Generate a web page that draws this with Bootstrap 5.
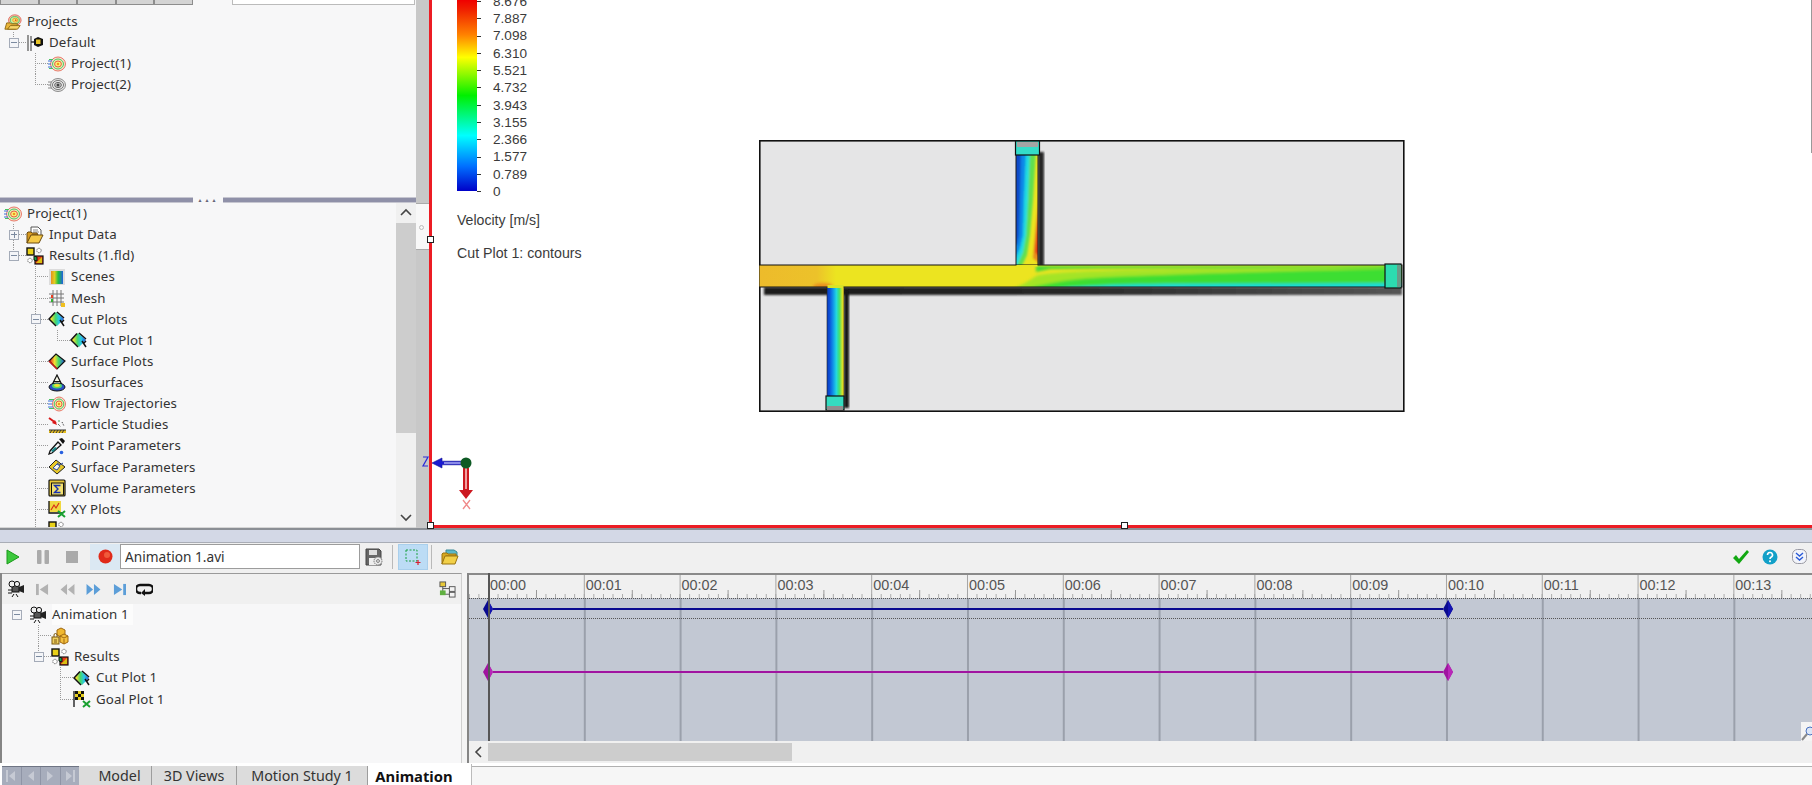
<!DOCTYPE html>
<html lang="en">
<head>
<meta charset="utf-8">
<title>Animation</title>
<link rel="stylesheet" href="https://cdn.jsdelivr.net/npm/bootstrap@5.3.0/dist/css/bootstrap.min.css">
<style>
html,body{height:785px;overflow:hidden;background:#fff}
body{font-family:"Noto Sans",sans-serif;font-size:13.3px;color:#333}
.sw-defs{position:absolute;width:0;height:0;overflow:hidden}
.sw-top{height:528px;flex:none}
.sw-left{width:416px;background:#f7f7f8}
.sw-tabs{height:5px;flex:none}
.sw-tab{width:38.6px;background:#d4d4d4;border:1px solid #8d8d8d;border-top:0}
.sw-find{width:183px;margin-left:39px;background:#fff;border:1px solid #bbb;border-top:0}
.sw-upper{height:192px;flex:none;padding-top:6px}
.sw-split{height:6px;flex:none;gap:3px}
.sw-splitbar{flex:1;background:#8f90a8;border-top:1px solid #c6c6d0;border-bottom:1px solid #c6c6d0}
.sw-grip{width:24px;color:#667;font-size:5px;line-height:6px;letter-spacing:2px;text-align:center}
.sw-lower{flex:1;min-height:0;border-bottom:1px solid #d6d6d6}
.sw-tree{padding:0;margin:0;list-style:none;overflow:hidden}
.sw-row{display:flex;height:21.14px;padding-left:4px}
.sw-anim .sw-row{padding-left:5px}
.sw-g{flex:0 0 22px;display:flex;align-items:center}
.sw-ic{flex:none;width:18px;height:18px;margin-right:5px;align-self:center}
.sw-tx{line-height:21.5px;white-space:nowrap;letter-spacing:.1px}
.sw-hl{background:#fcfcfc;padding-right:4px}
.sw-v{background:repeating-linear-gradient(#9a9a9a 0 1px,transparent 1px 2px) 9px 0/1px 100% no-repeat}
.sw-t{background:repeating-linear-gradient(#9a9a9a 0 1px,transparent 1px 2px) 9px 0/1px 100% no-repeat,repeating-linear-gradient(90deg,#9a9a9a 0 1px,transparent 1px 2px) 9px 50%/13px 1px no-repeat}
.sw-l{background:repeating-linear-gradient(#9a9a9a 0 1px,transparent 1px 2px) 9px 0/1px 50% no-repeat,repeating-linear-gradient(90deg,#9a9a9a 0 1px,transparent 1px 2px) 9px 50%/13px 1px no-repeat}
.sw-box{width:10px;height:10px;margin-left:5px;border:1px solid #a4abb8;background:linear-gradient(#7b8aa0,#7b8aa0) center/6px 1px no-repeat,#f4f5f8}
.sw-plus{background:linear-gradient(#7b8aa0,#7b8aa0) center/6px 1px no-repeat,linear-gradient(#7b8aa0,#7b8aa0) center/1px 6px no-repeat,#f4f5f8}
.sw-vbar{width:20px;flex:none;background:#f0f0f0}
.sw-vbtn{height:20px;flex:none}
.sw-vthumb{height:210px;flex:none;background:#cdcdcd}
.sw-strip{width:13px;flex:none;background:#c8c8c8}
.sw-sash{margin-top:203px;height:47px;background:#f8f8f8;border:1px solid #aaa;border-left:0;border-right:0}
.sw-dot{width:5px;height:5px;margin-top:21px;margin-left:3px;border:1px solid #bbb;border-radius:50%}
.sw-canvas{border-left:3px solid #ec1c24;border-bottom:3px solid #ec1c24;overflow:hidden;background:#fff}
.sw-legend{width:327px;flex:none;padding-left:25px;margin-top:-7.2px;font-family:"Liberation Sans",sans-serif;font-size:13.6px;color:#3b3b3b}
.sw-rainbow{width:20px;flex:none;margin-top:7px;margin-bottom:9px;background:linear-gradient(#f00000 0,#f02000 5%,#ff8000 18%,#ffff00 30%,#00f000 50%,#00ffff 71%,#0070ff 87%,#0000c8 100%)}
.sw-lgrow{height:17.3px;line-height:17.3px;display:flex;align-items:center}
.sw-tick{width:4px;height:1px;background:#333;margin-right:12px}
.sw-cap1{margin-top:10px;line-height:20px;font-size:14.1px}
.sw-cap2{margin-top:13px;line-height:20px;font-size:14.2px}
.sw-model{margin-top:140px;width:646px;height:272px;flex:none}
.sw-edge{width:1px;height:153px;background:#999;margin-left:auto;flex:none}
.sw-handle{position:absolute;width:7px;height:7px;background:#fff;border:1px solid #222}
.sw-h1{left:427px;top:236px}
.sw-h2{left:427px;top:522px}
.sw-h3{left:1121px;top:522px}
.sw-triad{position:absolute;left:420px;top:450px;width:60px;height:66px}
.sw-band{height:15px;flex:none;background:#d3d8e6;border-top:2px solid #8b8f95;border-bottom:1px solid #a9adb6}
.sw-tool{height:30px;flex:none;background:#f0f0f0;padding-right:5px;padding-bottom:3px}
.sw-tbtn{padding:0;border:0;border-radius:0;display:flex;align-items:center;justify-content:center;height:26px}
.sw-rec{background:#dbe8f3;width:30px;margin-left:12px}
.sw-sel{background:#bcdcf5;border:1px solid #a9cfec;width:30px;margin-left:5px}
.sw-b-play{margin-left:6px}
.sw-b-mid{margin-left:17px}
.sw-b-save{margin-left:5px;width:18px}
.sw-b-open{margin-left:9px}
.sw-name.form-control{width:240px;height:25px;flex:none;padding:0 4px;border:1px solid #9c9c9c;border-radius:0;font-size:13.7px;color:#333;background:#fff;line-height:22px}
.sw-sep{width:1px;height:24px;background:#b9b9b9}
.sw-sep1{margin-left:9px}
.sw-sep2{margin-left:3px}
.sw-ok2{margin-left:12px}
.sw-ok3{margin-left:14px}
.sw-mid{height:190px;flex:none;border-left:2px solid #858585}
.sw-anim{width:460px;flex:none;background:#f7f7f8;border-right:1px solid #d0d0d0;border-top:1px solid #9a9a9a}
.sw-ctl{height:30px;flex:none;background:#f0f0f0;padding:0 5px}
.sw-c1{margin-left:11px}
.sw-c2{margin-left:11px}
.sw-c3{margin-left:11px}
.sw-c4{margin-left:12px}
.sw-c5{margin-left:10px}
.sw-gap{width:5px;flex:none;background:#f4f4f4}
.sw-time{flex:1;min-width:0;border-left:2px solid #858585;overflow:hidden;background:#f0f0f0}
.sw-ruler{height:25px;flex:none;border-top:2px solid #8a8a8a;padding-left:19px;font-family:"Liberation Sans",sans-serif;font-size:14.4px;color:#555;
 background:linear-gradient(90deg,#a5a5a5 1px,transparent 1px) 19px 0/95.8px 100% repeat-x,linear-gradient(90deg,#999 1px,transparent 1px) 67px bottom/95.8px 8px repeat-x,linear-gradient(90deg,#aaa 1px,transparent 1px) 19px bottom/9.58px 4px repeat-x,#f0f0f0}
.sw-lab{flex:0 0 95.8px;padding-left:2px;line-height:20px}
.sw-grid{height:143px;flex:none;background:linear-gradient(90deg,#9aa0ab 1.5px,transparent 1.5px) 19px 0/95.8px 100% repeat-x,#c2c8d3;position:relative}
.sw-track{height:21px;display:flex;align-items:center;padding-left:14px}
.sw-blue{border-top:1px dotted #555;border-bottom:1px dotted #555}
.sw-mag{margin-top:43px;height:20px}
.sw-line{width:950px;height:2px}
.sw-lineb{background:#0a0a90}
.sw-linem{background:#a014a0;box-shadow:0 0 1px #e8a0e8}
.sw-play{position:absolute;left:19px;top:-25px;height:168px;width:1.5px;background:#565656}
.sw-zoom{position:absolute;right:0;bottom:0;width:11px;height:19px;background:#f4f4f4}
.sw-hbar{height:22px;flex:none;background:#f0f0f0}
.sw-hbtn{width:19px;flex:none}
.sw-hthumb{width:304px;height:18px;background:#cdcdcd}
.sw-tabsbot{height:22px;flex:none}
.sw-pager{width:77px;margin-left:2px;margin-top:3px;background:#8f95a6;border-top:1px solid #6f7584;gap:1px}
.sw-pg{flex:1;background:#a7adbc;display:flex;align-items:center;justify-content:center}
.sw-nav{flex-wrap:nowrap}
.sw-nav .nav-link{padding:0;height:19px;margin-top:3px;font-size:14.3px;line-height:20px;color:#333;background:#dcdcdc;border-right:1px solid #9d9d9d;text-align:center;border-radius:0}
.sw-nav .nav-link.active{background:#fff;font-weight:700;font-size:14.8px;color:#111;margin-top:1px;height:21px;line-height:24px;border-right:1px solid #bbb}
.sw-t1{width:73px;padding-left:9px!important}
.sw-t2{width:85px}
.sw-t3{width:131px}
.sw-t4{width:104px;padding-right:11px!important}
.sw-rest{flex:1;margin-top:3px;background:#f6f6f6;border-top:1px solid #b0b0b0}
</style>
</head>
<body class="d-flex flex-column">

<svg class="sw-defs" aria-hidden="true">
<defs>
<linearGradient id="g-rb" x1="0" y1=".5" x2="1" y2=".5"><stop offset=".15" stop-color="#f4e030"/><stop offset=".42" stop-color="#48d868"/><stop offset=".68" stop-color="#28c8e8"/><stop offset=".95" stop-color="#2860d8"/></linearGradient>
<linearGradient id="g-sf" x1="0" y1=".5" x2="1" y2=".5"><stop offset=".1" stop-color="#e84020"/><stop offset=".35" stop-color="#f4e030"/><stop offset=".6" stop-color="#48d868"/><stop offset=".95" stop-color="#2860d8"/></linearGradient>
<linearGradient id="g-sc" x1="0" x2="1" y1="0" y2="0"><stop offset="0" stop-color="#e89020"/><stop offset=".3" stop-color="#e0d020"/><stop offset=".6" stop-color="#20c040"/><stop offset="1" stop-color="#2060e0"/></linearGradient>
<linearGradient id="g-main" x1="0" x2="1" y1="0" y2="0"><stop offset="0" stop-color="#edbb2b"/><stop offset=".09" stop-color="#ecc22a"/><stop offset=".12" stop-color="#ece420"/><stop offset="1" stop-color="#ece420"/></linearGradient>
<linearGradient id="g-bot" x1="0" x2="1" y1="0" y2="0"><stop offset="0" stop-color="#0a3cc0"/><stop offset=".15" stop-color="#0a50d8"/><stop offset=".35" stop-color="#1090e8"/><stop offset=".55" stop-color="#22d8e0"/><stop offset=".72" stop-color="#40e070"/><stop offset=".9" stop-color="#d8e428"/><stop offset="1" stop-color="#e8c020"/></linearGradient>
<linearGradient id="g-sh" x1="0" x2="1" y1="0" y2="0"><stop offset="0" stop-color="#1a1a1a"/><stop offset=".45" stop-color="#262626"/><stop offset="1" stop-color="#555"/></linearGradient>
<filter id="f-soft" x="-5%" y="-30%" width="110%" height="160%"><feGaussianBlur stdDeviation="1.6"/></filter>
<filter id="f-br" x="-30%" y="-10%" width="160%" height="120%"><feGaussianBlur stdDeviation="1"/></filter>
<filter id="f-sh" x="-5%" y="-50%" width="110%" height="200%"><feGaussianBlur stdDeviation="1"/></filter>
<clipPath id="c-pipe"><rect x="759" y="265" width="643" height="22"/></clipPath>
<clipPath id="c-top"><rect x="1016" y="150" width="22" height="116"/></clipPath>

<symbol id="i-contour" viewBox="0 0 18 18"><ellipse cx="10" cy="9" rx="7.500" ry="7" fill="#fbe0d0" stroke="#e87a68"/><ellipse cx="10" cy="9" rx="5.500" ry="5" fill="#e4f2b0" stroke="#50c468"/><ellipse cx="10" cy="9" rx="3.400" ry="3" fill="#fff07a" stroke="#e85a48"/><circle cx="10" cy="9" r="1.300" fill="#e8a018"/><path d="M0 6h4M0 9h3M0 12h4" stroke="#3a70d8"/><path d="M1 4.500h4M1 13.500h4" stroke="#48c060"/></symbol>
<symbol id="i-eye" viewBox="0 0 18 18"><ellipse cx="10" cy="9" rx="7.500" ry="6.500" fill="#e2e2e2" stroke="#8e8e8e"/><ellipse cx="10" cy="9" rx="5.500" ry="4.500" fill="#f2f2f2" stroke="#777"/><ellipse cx="10" cy="9" rx="3.400" ry="2.600" fill="#ccc" stroke="#666"/><circle cx="10" cy="9" r="1.500" fill="#444"/><path d="M0 6h4M0 9h3M0 12h4" stroke="#888"/></symbol>
<symbol id="i-projects" viewBox="0 0 20 18"><ellipse cx="12" cy="7" rx="7" ry="6" fill="#f6c0a8" stroke="#e06a60"/><ellipse cx="12" cy="7" rx="5" ry="4" fill="#c8e8a0" stroke="#4cc060"/><ellipse cx="12.500" cy="7" rx="2.800" ry="2.200" fill="#ffe070" stroke="#e8a020"/><circle cx="13" cy="7" r="1" fill="#e85a20"/><path d="M1 17l2-7h4l1 1h7l-2 6z" fill="#eab63a" stroke="#8a6410"/><path d="M4 17l3-4h11l-3 4z" fill="#f7d76a" stroke="#8a6410"/></symbol>
<symbol id="i-default" viewBox="0 0 18 18"><path d="M2 1v16M5 2v15" stroke="#7c7c7c" stroke-width="1.600" fill="none"/><path d="M5 8h3" stroke="#333" stroke-width="1.500"/><path d="M8 5l4-2 5 2v6l-5 2-4-2z" fill="#111"/><rect x="10" y="5.500" width="4.500" height="4.500" fill="#e8c428"/></symbol>
<symbol id="i-input" viewBox="0 0 18 18"><path d="M5 1h7l3 3v7H5z" fill="#fff" stroke="#555"/><path d="M7 4h5M7 6h6" stroke="#888"/><path d="M1 17V7l1-1h3l1 1h5l1 2H6z" fill="#d89a20" stroke="#6a4a10"/><path d="M1 17l4-8h12l-4 8z" fill="#f4c846" stroke="#6a4a10"/></symbol>
<symbol id="i-results" viewBox="0 0 18 18"><rect x="1" y="1" width="7" height="7" fill="#e8d018" stroke="#111" stroke-width="1.400"/><rect x="9" y="9" width="8" height="8" fill="#e83818" stroke="#111" stroke-width="1.200"/><path d="M10 16l6-6v6z" fill="#d8c010"/><path d="M8 9l3 1v4l-3-1z" fill="#18a048" stroke="#111"/><circle cx="13" cy="3.500" r="2.200" fill="#fff" stroke="#666" stroke-dasharray="1 .6"/><circle cx="4" cy="13.500" r="2.200" fill="#fff" stroke="#666" stroke-dasharray="1 .6"/></symbol>
<symbol id="i-scenes" viewBox="0 0 18 18"><rect x="1" y="1" width="16" height="16" fill="#dcdcdc"/><rect x="3" y="3" width="12" height="13" fill="url(#g-sc)"/></symbol>
<symbol id="i-mesh" viewBox="0 0 18 18"><path d="M1 5h15M1 9h15M1 13h15M5 1v16M9 1v16M13 1v16" stroke="#777"/><rect x="3" y="6" width="2" height="3" fill="#e84020"/><rect x="3" y="10" width="2" height="3" fill="#30b030"/><rect x="13" y="14" width="4" height="4" fill="#f0c020"/></symbol>
<symbol id="i-cut" viewBox="0 0 18 18"><path d="M1 9l7-7 8 7-7 7z" fill="url(#g-rb)"/><path d="M7 2.500L1 9l7 7M9 2l7 6" fill="none" stroke="#111" stroke-width="1.500"/><path d="M12 10l4 6M16 10l-3 3" stroke="#111" stroke-width="1.500"/></symbol>
<symbol id="i-surf" viewBox="0 0 18 18"><path d="M1 9l7-7 9 7-8 8z" fill="url(#g-sf)" stroke="#111" stroke-width="1.200"/><path d="M1 9l8 8" stroke="#c81818" stroke-width="1.400"/></symbol>
<symbol id="i-iso" viewBox="0 0 18 18"><path d="M9 1l6 12H3z" fill="#f6f6e8" stroke="#111" stroke-width="1.200"/><ellipse cx="9" cy="13" rx="8" ry="4" fill="#2850c8" stroke="#111"/><ellipse cx="9" cy="12" rx="5" ry="2.400" fill="#58d868"/><ellipse cx="9" cy="11.500" rx="3" ry="1.400" fill="#f4e030"/><path d="M5.500 7.500h7" stroke="#111"/></symbol>
<symbol id="i-flow" viewBox="0 0 18 18"><ellipse cx="11" cy="9" rx="6.500" ry="7" fill="#fbe0d0" stroke="#e87a68"/><ellipse cx="11" cy="9" rx="4.800" ry="5" fill="#e4f2b0" stroke="#50c468"/><ellipse cx="11" cy="9" rx="3" ry="3" fill="#fff07a" stroke="#e85a48"/><circle cx="11" cy="9" r="1.200" fill="#e8a018"/><path d="M0 6h5M0 9h4M0 12h5" stroke="#3a70d8"/><path d="M1 4.500h5M1 13.500h5" stroke="#48c060"/></symbol>
<symbol id="i-part" viewBox="0 0 18 18"><path d="M1 2l7 5" stroke="#d81818" stroke-width="2"/><path d="M9 9L4 7l3-3z" fill="#d81818"/><circle cx="11" cy="5" r=".8" fill="#30a040"/><path d="M10 8l3 3M14 6l2 4" stroke="#333" stroke-dasharray="1 1" fill="none"/><rect x="1" y="14" width="17" height="3" fill="#e8c020"/><path d="M2 17l2-3M5 17l2-3M8 17l2-3M11 17l2-3M14 17l2-3" stroke="#333"/><path d="M1 14h17" stroke="#333"/></symbol>
<symbol id="i-point" viewBox="0 0 18 18"><path d="M11 2l3-1 3 3-2 3z" fill="#111"/><path d="M2 14l8-9 3 3-9 8-3 1z" fill="#f4f4f4" stroke="#111" stroke-width="1.300"/><path d="M3 14l4-4 2 1-4 4z" fill="#1a8a8a"/><circle cx="13.500" cy="15.500" r="1.800" fill="#2860e0"/></symbol>
<symbol id="i-sparam" viewBox="0 0 18 18"><path d="M1 9l7-7 9 7-8 7z" fill="#e8c828" stroke="#222"/><path d="M5 10l4-4 3 2-3 4z" fill="#f4f4f4" stroke="#2a4aa0"/><path d="M9 5l3 2 3-2" stroke="#2a4aa0" fill="none"/></symbol>
<symbol id="i-vparam" viewBox="0 0 18 18"><rect x="1" y="1" width="16" height="16" rx="1" fill="#e8c838" stroke="#111" stroke-width="1.200"/><rect x="3.500" y="4" width="12" height="12" fill="#f2e070" stroke="#111"/><path d="M12.500 6.500H6.500L10 10l-3.500 3.500h6" fill="none" stroke="#1830b0" stroke-width="1.400"/></symbol>
<symbol id="i-xy" viewBox="0 0 18 18"><rect x="1" y="1" width="12" height="11" fill="#f0d840"/><path d="M1 1v12h14" stroke="#111" stroke-width="1.300" fill="none"/><path d="M3 10l3-5 2 3 3-5" stroke="#d83018" stroke-width="1.200" fill="none"/><path d="M10 11l7 6M17 11l-7 6" stroke="#18a030" stroke-width="2"/></symbol>
<symbol id="i-goal" viewBox="0 0 18 18"><path d="M1 1v16" stroke="#111" stroke-width="1.300"/><rect x="2" y="1" width="9" height="9" fill="#e8d020"/><path d="M2 1h3v3H2zM8 1h3v3H8zM5 4h3v3H5zM2 7h3v3H2zM8 7h3v3H8z" fill="#111"/><path d="M10 11l7 6M17 11l-7 6" stroke="#18a030" stroke-width="2"/></symbol>
<symbol id="i-anim" viewBox="0 0 18 18"><rect x="5" y="5" width="7" height="7" fill="#555" stroke="#111"/><circle cx="5" cy="4" r="3" fill="#eee" stroke="#111"/><circle cx="10" cy="4" r="2.600" fill="#eee" stroke="#111"/><path d="M12 7l5-2v8l-5-2z" fill="#222"/><path d="M1 10h4M1 13h4" stroke="#111"/><path d="M7 14l-2 3M9 14l2 3" stroke="#111"/></symbol>
<symbol id="i-cubes" viewBox="0 0 18 18"><path d="M6 3l4-2 4 2v5l-4 2-4-2z" fill="#f0b830" stroke="#a06810"/><path d="M9 9l4-2 4 2v6l-4 2-4-2z" fill="#f4c040" stroke="#a06810"/><path d="M13 12v5M9 9l4 2 4-2" stroke="#a06810" fill="none"/><rect x="1" y="10" width="7" height="7" fill="#f0d060" stroke="#7a5810"/><path d="M3 10V8a1.500 1.500 0 0 1 3 0v2" stroke="#7a5810" fill="none"/><path d="M3 13h3M3 15h3" stroke="#7a5810"/></symbol>
<symbol id="i-folder" viewBox="0 0 18 18"><path d="M5 2h8l3 2v5H5z" fill="#5cb8c8" stroke="#3a8a98"/><path d="M1 16V6l1-1h4l1 1h8v2H5z" fill="#d8a820" stroke="#9a7410"/><path d="M1 16l3-8h13l-3 8z" fill="#f2d048" stroke="#9a7410"/></symbol>
<symbol id="i-save" viewBox="0 0 18 18"><path d="M1 1h13l2 2v14H1z" fill="#666" stroke="#444"/><rect x="4" y="2" width="8" height="5" fill="#ddd"/><rect x="4" y="10" width="9" height="7" fill="#eee"/><circle cx="13" cy="13" r="4" fill="#e8e8e8" stroke="#777" stroke-dasharray="1.500 .7"/><circle cx="13" cy="13" r="1.400" fill="#fff" stroke="#777"/></symbol>
<symbol id="i-tree2" viewBox="0 0 18 18"><rect x="1" y="1" width="6" height="5" fill="#e8c838" stroke="#555"/><rect x="11" y="6" width="6" height="5" fill="#f4f4f4" stroke="#555"/><rect x="11" y="12" width="6" height="5" fill="#f4f4f4" stroke="#555"/><path d="M4 6v8h7M4 8h7" stroke="#555" fill="none"/><rect x="1" y="10" width="6" height="5" fill="#60b040"/></symbol>
<symbol id="i-first" viewBox="0 0 14 14"><rect x="0" y="1" width="3" height="12" fill="#b2b2b2"/><path d="M13 1L4 7l9 6z" fill="#b2b2b2"/></symbol>
<symbol id="i-rew" viewBox="0 0 15 14"><path d="M7 1L0 7l7 6zM15 1L8 7l7 6z" fill="#b2b2b2"/></symbol>
<symbol id="i-fwd" viewBox="0 0 15 14"><path d="M0 1l7 6-7 6zM8 1l7 6-7 6z" fill="#5c9ed8"/></symbol>
<symbol id="i-last" viewBox="0 0 14 14"><path d="M1 1l9 6-9 6z" fill="#5c9ed8"/><rect x="11" y="1" width="3" height="12" fill="#5c9ed8"/></symbol>
<symbol id="i-dia-b" viewBox="0 0 10 18"><path d="M5 0L0 9l5 9 5-9z" fill="#0a0a90"/><path d="M5 0l5 9-5 9z" fill="#1414b0"/></symbol>
<symbol id="i-dia-m" viewBox="0 0 10 18"><path d="M5 0L0 9l5 9 5-9z" fill="#a014a0"/><path d="M5 0l5 9-5 9z" fill="#b828b8"/></symbol>
<symbol id="i-chev" viewBox="0 0 12 12"><path d="M1 8l5-5 5 5" fill="none" stroke="#444" stroke-width="1.600"/></symbol>
</defs>
</svg>

<div class="sw-top d-flex position-relative">
  <div class="sw-left d-flex flex-column flex-shrink-0">
    <div class="sw-tabs d-flex">
      <span class="sw-tab"></span><span class="sw-tab"></span><span class="sw-tab"></span><span class="sw-tab"></span><span class="sw-tab"></span>
      <span class="sw-find"></span>
    </div>
    <div class="sw-upper">
      <ul class="sw-tree">
        <li class="sw-row"><svg class="sw-ic"><use href="#i-projects"/></svg><span class="sw-tx">Projects</span></li>
        <li class="sw-row"><span class="sw-g sw-l"><span class="sw-box"></span></span><svg class="sw-ic"><use href="#i-default"/></svg><span class="sw-tx">Default</span></li>
        <li class="sw-row"><span class="sw-g"></span><span class="sw-g sw-t"></span><svg class="sw-ic"><use href="#i-contour"/></svg><span class="sw-tx">Project(1)</span></li>
        <li class="sw-row"><span class="sw-g"></span><span class="sw-g sw-l"></span><svg class="sw-ic"><use href="#i-eye"/></svg><span class="sw-tx">Project(2)</span></li>
      </ul>
    </div>
    <div class="sw-split d-flex">
      <span class="sw-splitbar"></span><span class="sw-grip">▲▲▲</span><span class="sw-splitbar"></span>
    </div>
    <div class="sw-lower d-flex">
      <ul class="sw-tree flex-grow-1">
        <li class="sw-row"><svg class="sw-ic"><use href="#i-contour"/></svg><span class="sw-tx">Project(1)</span></li>
        <li class="sw-row"><span class="sw-g sw-t"><span class="sw-box sw-plus"></span></span><svg class="sw-ic"><use href="#i-input"/></svg><span class="sw-tx">Input Data</span></li>
        <li class="sw-row"><span class="sw-g sw-l"><span class="sw-box"></span></span><svg class="sw-ic"><use href="#i-results"/></svg><span class="sw-tx">Results (1.fld)</span></li>
        <li class="sw-row"><span class="sw-g"></span><span class="sw-g sw-t"></span><svg class="sw-ic"><use href="#i-scenes"/></svg><span class="sw-tx">Scenes</span></li>
        <li class="sw-row"><span class="sw-g"></span><span class="sw-g sw-t"></span><svg class="sw-ic"><use href="#i-mesh"/></svg><span class="sw-tx">Mesh</span></li>
        <li class="sw-row"><span class="sw-g"></span><span class="sw-g sw-t"><span class="sw-box"></span></span><svg class="sw-ic"><use href="#i-cut"/></svg><span class="sw-tx">Cut Plots</span></li>
        <li class="sw-row"><span class="sw-g"></span><span class="sw-g sw-v"></span><span class="sw-g sw-l"></span><svg class="sw-ic"><use href="#i-cut"/></svg><span class="sw-tx">Cut Plot 1</span></li>
        <li class="sw-row"><span class="sw-g"></span><span class="sw-g sw-t"></span><svg class="sw-ic"><use href="#i-surf"/></svg><span class="sw-tx">Surface Plots</span></li>
        <li class="sw-row"><span class="sw-g"></span><span class="sw-g sw-t"></span><svg class="sw-ic"><use href="#i-iso"/></svg><span class="sw-tx">Isosurfaces</span></li>
        <li class="sw-row"><span class="sw-g"></span><span class="sw-g sw-t"></span><svg class="sw-ic"><use href="#i-flow"/></svg><span class="sw-tx">Flow Trajectories</span></li>
        <li class="sw-row"><span class="sw-g"></span><span class="sw-g sw-t"></span><svg class="sw-ic"><use href="#i-part"/></svg><span class="sw-tx">Particle Studies</span></li>
        <li class="sw-row"><span class="sw-g"></span><span class="sw-g sw-t"></span><svg class="sw-ic"><use href="#i-point"/></svg><span class="sw-tx">Point Parameters</span></li>
        <li class="sw-row"><span class="sw-g"></span><span class="sw-g sw-t"></span><svg class="sw-ic"><use href="#i-sparam"/></svg><span class="sw-tx">Surface Parameters</span></li>
        <li class="sw-row"><span class="sw-g"></span><span class="sw-g sw-t"></span><svg class="sw-ic"><use href="#i-vparam"/></svg><span class="sw-tx">Volume Parameters</span></li>
        <li class="sw-row"><span class="sw-g"></span><span class="sw-g sw-t"></span><svg class="sw-ic"><use href="#i-xy"/></svg><span class="sw-tx">XY Plots</span></li>
        <li class="sw-row"><span class="sw-g"></span><span class="sw-g sw-t"></span><svg class="sw-ic"><use href="#i-results"/></svg></li>
      </ul>
      <div class="sw-vbar d-flex flex-column">
        <div class="sw-vbtn d-flex align-items-center justify-content-center"><svg width="12" height="12"><use href="#i-chev"/></svg></div>
        <div class="sw-vthumb"></div>
        <div class="flex-grow-1"></div>
        <div class="sw-vbtn d-flex align-items-center justify-content-center"><svg width="12" height="12"><use href="#i-chev" transform="rotate(180 6 6)"/></svg></div>
      </div>
    </div>
  </div>
  <div class="sw-strip"><div class="sw-sash"><div class="sw-dot"></div></div></div>
  <div class="sw-canvas flex-grow-1 d-flex">
    <div class="sw-legend">
      <div class="d-flex">
        <div class="sw-rainbow"></div>
        <div>
          <div class="sw-lgrow"><span class="sw-tick"></span>8.676</div>
          <div class="sw-lgrow"><span class="sw-tick"></span>7.887</div>
          <div class="sw-lgrow"><span class="sw-tick"></span>7.098</div>
          <div class="sw-lgrow"><span class="sw-tick"></span>6.310</div>
          <div class="sw-lgrow"><span class="sw-tick"></span>5.521</div>
          <div class="sw-lgrow"><span class="sw-tick"></span>4.732</div>
          <div class="sw-lgrow"><span class="sw-tick"></span>3.943</div>
          <div class="sw-lgrow"><span class="sw-tick"></span>3.155</div>
          <div class="sw-lgrow"><span class="sw-tick"></span>2.366</div>
          <div class="sw-lgrow"><span class="sw-tick"></span>1.577</div>
          <div class="sw-lgrow"><span class="sw-tick"></span>0.789</div>
          <div class="sw-lgrow"><span class="sw-tick"></span>0</div>
        </div>
      </div>
      <div class="sw-cap1">Velocity [m/s]</div>
      <div class="sw-cap2">Cut Plot 1: contours</div>
    </div>
    <svg class="sw-model" viewBox="759 140 646 272">
      <rect x="759.800" y="140.800" width="644" height="270.400" fill="#e5e5e6" stroke="#111" stroke-width="1.600"/>
      <rect x="764" y="287" width="638" height="8" fill="url(#g-sh)" filter="url(#f-sh)"/>
      <rect x="1038" y="152" width="6" height="114" fill="#262626" filter="url(#f-sh)"/>
      <rect x="844" y="290" width="5" height="118" fill="#181818" filter="url(#f-sh)"/>
      <rect x="1016" y="150" width="22" height="116" fill="#ece420"/>
      <g clip-path="url(#c-top)"><g filter="url(#f-br)">
        <path d="M1010 150H1036L1033 200 1030 235 1027 255 1020 270H1010z" fill="#60e050"/>
        <path d="M1010 150H1030L1028 200 1026 235 1023 252 1015 270H1010z" fill="#20dce0"/>
        <path d="M1010 150H1026L1024 200 1023 235 1020 248 1014 262H1010z" fill="#1088e8"/>
        <path d="M1010 150H1021L1020 200 1019 235 1017 245H1010z" fill="#0c48c8"/>
        <path d="M1040 185L1036 225 1033 258 1040 264z" fill="#ea8a1c"/>
        <path d="M1040 205L1037 230 1035 252 1040 258z" fill="#e03818"/>
      </g></g>
      <path d="M1016 150v116M1038 150v116" stroke="#1a1a1a" stroke-width="1"/>
      <rect x="827" y="287" width="17" height="112" fill="url(#g-bot)" stroke="#222" stroke-width=".6"/>
      <rect x="759" y="265" width="643" height="22" fill="url(#g-main)"/>
      <g clip-path="url(#c-pipe)">
        <g filter="url(#f-soft)">
          <path d="M1000 292C1018 288 1026 283 1036 276 1050 271 1120 270 1240 268L1410 264V292z" fill="#a4e428"/>
          <path d="M1014 292C1040 285 1060 279 1110 277 1200 273 1300 271 1410 268V292z" fill="#3cde30"/>
          <path d="M1036 266H1410V267.500L1100 268.500 1050 269 1036 272z" fill="#40d838"/>
          <path d="M1030 292C1060 287 1100 284 1180 284L1410 283V292z" fill="#16dcd8"/>
          <ellipse cx="823" cy="286" rx="10" ry="3" fill="#e8901c"/>
        </g>
      </g>
      <rect x="759" y="265" width="643" height="22" fill="none" stroke="#111" stroke-width="1"/>
      <rect x="1016.500" y="265" width="21" height="1.500" fill="#e8e420"/>
      <rect x="827.500" y="285" width="16" height="3" fill="#d8e428"/>
      <rect x="1015.500" y="141" width="24" height="14" fill="#34dcc8" stroke="#111" stroke-width="1.200"/>
      <rect x="1017" y="142" width="21" height="5" fill="#a4a4a4"/>
      <rect x="826" y="396" width="18" height="14" fill="#34dcc0" stroke="#111" stroke-width="1.200"/>
      <rect x="827" y="406" width="16" height="4" fill="#8f8f8f"/>
      <rect x="1385" y="264" width="16" height="24" fill="#2cdcb0" stroke="#111" stroke-width="1.200"/>
      <rect x="1397" y="265" width="4" height="22" fill="#6a9a88"/>
    </svg>
    <div class="sw-edge"></div>
  </div>
  <span class="sw-handle sw-h1"></span>
  <span class="sw-handle sw-h2"></span>
  <span class="sw-handle sw-h3"></span>
  <svg class="sw-triad" viewBox="420 450 60 66">
    <path d="M432 463l10-5v3.200h20v3.600h-20v3.200z" fill="#1a1ad0" stroke="#101090" stroke-width=".6"/>
    <path d="M444 462h18v2h-18z" fill="#8a8ae8"/>
    <path d="M463 468h6v22h4l-7 9-7-9h4z" fill="#cc1820"/>
    <path d="M465 468h2v21h-2z" fill="#f0a0a0"/>
    <circle cx="466" cy="463" r="5.500" fill="#0e5a24"/>
    <path d="M423 457h5l-5 9h5" fill="none" stroke="#2a2ad8" stroke-width="1.200"/>
    <path d="M463 500l7 9M470 500l-7 9" stroke="#f08a8a" stroke-width="1.300"/>
  </svg>
</div>

<div class="sw-band"></div>

<div class="sw-tool d-flex align-items-center">
  <button class="btn sw-tbtn sw-b-play" type="button" aria-label="Play"><svg width="14" height="16" viewBox="0 0 14 16"><path d="M1 1l12 7-12 7z" fill="#3cc83c" stroke="#1a9a1a"/></svg></button>
  <button class="btn sw-tbtn sw-b-mid" type="button" aria-label="Pause"><svg width="12" height="14" viewBox="0 0 12 14"><rect width="4.500" height="14" rx="1" fill="#aaa"/><rect x="7.500" width="4.500" height="14" rx="1" fill="#aaa"/></svg></button>
  <button class="btn sw-tbtn sw-b-mid" type="button" aria-label="Stop"><svg width="12" height="12"><rect width="12" height="12" fill="#aaa"/></svg></button>
  <button class="btn sw-tbtn sw-rec" type="button" aria-label="Record"><svg width="15" height="15" viewBox="0 0 15 15"><circle cx="7.500" cy="7.500" r="7" fill="#e02a1a"/><circle cx="9" cy="6" r="3" fill="#f05a3a"/></svg></button>
  <input class="form-control sw-name" type="text" value="Animation 1.avi" aria-label="File name">
  <button class="btn sw-tbtn sw-b-save" type="button" aria-label="Save"><svg width="18" height="18"><use href="#i-save"/></svg></button>
  <span class="sw-sep sw-sep1"></span>
  <button class="btn sw-tbtn sw-sel" type="button" aria-label="Select"><svg width="16" height="16" viewBox="0 0 16 16"><rect x="1" y="1" width="11" height="11" fill="none" stroke="#18a040" stroke-dasharray="2 1.500"/><path d="M13 11v5M10.500 13.500h5" stroke="#d82030" stroke-width="1.200"/></svg></button>
  <span class="sw-sep sw-sep2"></span>
  <button class="btn sw-tbtn sw-b-open" type="button" aria-label="Open"><svg width="18" height="18"><use href="#i-folder"/></svg></button>
  <div class="ms-auto d-flex align-items-center">
    <svg width="18" height="16" viewBox="0 0 18 16"><path d="M1 9l3-3 3 4 8-9 2 2-10 12z" fill="#12a812"/></svg>
    <svg class="sw-ok2" width="16" height="16" viewBox="0 0 16 16"><circle cx="8" cy="8" r="7.500" fill="#12a0c8"/><path d="M5.500 6a2.500 2.500 0 1 1 3.500 2.300c-.7.4-1 .7-1 1.700" fill="none" stroke="#fff" stroke-width="1.600"/><circle cx="8" cy="12.300" r="1" fill="#fff"/></svg>
    <svg class="sw-ok3" width="15" height="15" viewBox="0 0 15 15"><rect x=".5" y=".5" width="14" height="14" rx="5" fill="#f2f4fa" stroke="#9a9aa4"/><path d="M4 4l3.500 3L11 4M4 8l3.500 3L11 8" fill="none" stroke="#2a5ad8" stroke-width="1.400"/></svg>
  </div>
</div>

<div class="sw-mid d-flex">
  <div class="sw-anim d-flex flex-column">
    <div class="sw-ctl d-flex align-items-center">
      <svg width="18" height="18"><use href="#i-anim"/></svg>
      <svg class="sw-c1" width="13" height="13"><use href="#i-first"/></svg>
      <svg class="sw-c2" width="15" height="13"><use href="#i-rew"/></svg>
      <svg class="sw-c3" width="15" height="13"><use href="#i-fwd"/></svg>
      <svg class="sw-c4" width="13" height="13"><use href="#i-last"/></svg>
      <svg class="sw-c5" width="17" height="14" viewBox="0 0 17 14"><path d="M5 11H4a3 3 0 0 1 0-8h9a3 3 0 0 1 0 8H8" fill="none" stroke="#111" stroke-width="2.400"/><path d="M9 7v7l-4-3z" fill="#111"/></svg>
      <svg width="17" height="17" class="ms-auto"><use href="#i-tree2"/></svg>
    </div>
    <ul class="sw-tree">
      <li class="sw-row"><span class="sw-g"><span class="sw-box"></span></span><svg class="sw-ic"><use href="#i-anim"/></svg><span class="sw-tx sw-hl">Animation 1</span></li>
      <li class="sw-row"><span class="sw-g"></span><span class="sw-g sw-t"></span><svg class="sw-ic"><use href="#i-cubes"/></svg></li>
      <li class="sw-row"><span class="sw-g"></span><span class="sw-g sw-l"><span class="sw-box"></span></span><svg class="sw-ic"><use href="#i-results"/></svg><span class="sw-tx">Results</span></li>
      <li class="sw-row"><span class="sw-g"></span><span class="sw-g"></span><span class="sw-g sw-t"></span><svg class="sw-ic"><use href="#i-cut"/></svg><span class="sw-tx">Cut Plot 1</span></li>
      <li class="sw-row"><span class="sw-g"></span><span class="sw-g"></span><span class="sw-g sw-l"></span><svg class="sw-ic"><use href="#i-goal"/></svg><span class="sw-tx">Goal Plot 1</span></li>
    </ul>
  </div>
  <div class="sw-gap"></div>
  <div class="sw-time d-flex flex-column">
    <div class="sw-ruler d-flex">
      <span class="sw-lab">00:00</span><span class="sw-lab">00:01</span><span class="sw-lab">00:02</span><span class="sw-lab">00:03</span><span class="sw-lab">00:04</span><span class="sw-lab">00:05</span><span class="sw-lab">00:06</span><span class="sw-lab">00:07</span><span class="sw-lab">00:08</span><span class="sw-lab">00:09</span><span class="sw-lab">00:10</span><span class="sw-lab">00:11</span><span class="sw-lab">00:12</span><span class="sw-lab">00:13</span>
    </div>
    <div class="sw-grid">
      <span class="sw-play"></span>
      <div class="sw-track sw-blue"><svg width="10" height="18"><use href="#i-dia-b"/></svg><span class="sw-line sw-lineb"></span><svg width="10" height="18"><use href="#i-dia-b"/></svg></div>
      <div class="sw-track sw-mag"><svg width="10" height="18"><use href="#i-dia-m"/></svg><span class="sw-line sw-linem"></span><svg width="10" height="18"><use href="#i-dia-m"/></svg></div>
      <span class="sw-zoom"><svg width="14" height="19" viewBox="0 0 14 19"><circle cx="9" cy="8" r="4" fill="#dbe6f6" stroke="#4a70c0"/><path d="M6 11l-5 6" stroke="#888" stroke-width="2"/></svg></span>
    </div>
    <div class="sw-hbar d-flex align-items-center">
      <div class="sw-hbtn d-flex justify-content-center"><svg width="12" height="12"><use href="#i-chev" transform="rotate(-90 6 6)"/></svg></div>
      <div class="sw-hthumb"></div>
    </div>
  </div>
</div>

<div class="sw-tabsbot d-flex">
  <div class="sw-pager d-flex">
    <span class="sw-pg"><svg width="10" height="12" viewBox="0 0 10 12"><rect width="2" height="12" fill="#c6cad4"/><path d="M9 1L3 6l6 5z" fill="#c6cad4"/></svg></span>
    <span class="sw-pg"><svg width="8" height="12" viewBox="0 0 8 12"><path d="M7 1L1 6l6 5z" fill="#c6cad4"/></svg></span>
    <span class="sw-pg"><svg width="8" height="12" viewBox="0 0 8 12"><path d="M1 1l6 5-6 5z" fill="#c6cad4"/></svg></span>
    <span class="sw-pg"><svg width="10" height="12" viewBox="0 0 10 12"><path d="M1 1l6 5-6 5z" fill="#c6cad4"/><rect x="8" width="2" height="12" fill="#c6cad4"/></svg></span>
  </div>
  <ul class="nav sw-nav">
    <li class="nav-item"><a class="nav-link sw-t1" href="#">Model</a></li>
    <li class="nav-item"><a class="nav-link sw-t2" href="#">3D Views</a></li>
    <li class="nav-item"><a class="nav-link sw-t3" href="#">Motion Study 1</a></li>
    <li class="nav-item"><a class="nav-link active sw-t4" href="#">Animation</a></li>
  </ul>
  <div class="sw-rest"></div>
</div>

</body>
</html>
